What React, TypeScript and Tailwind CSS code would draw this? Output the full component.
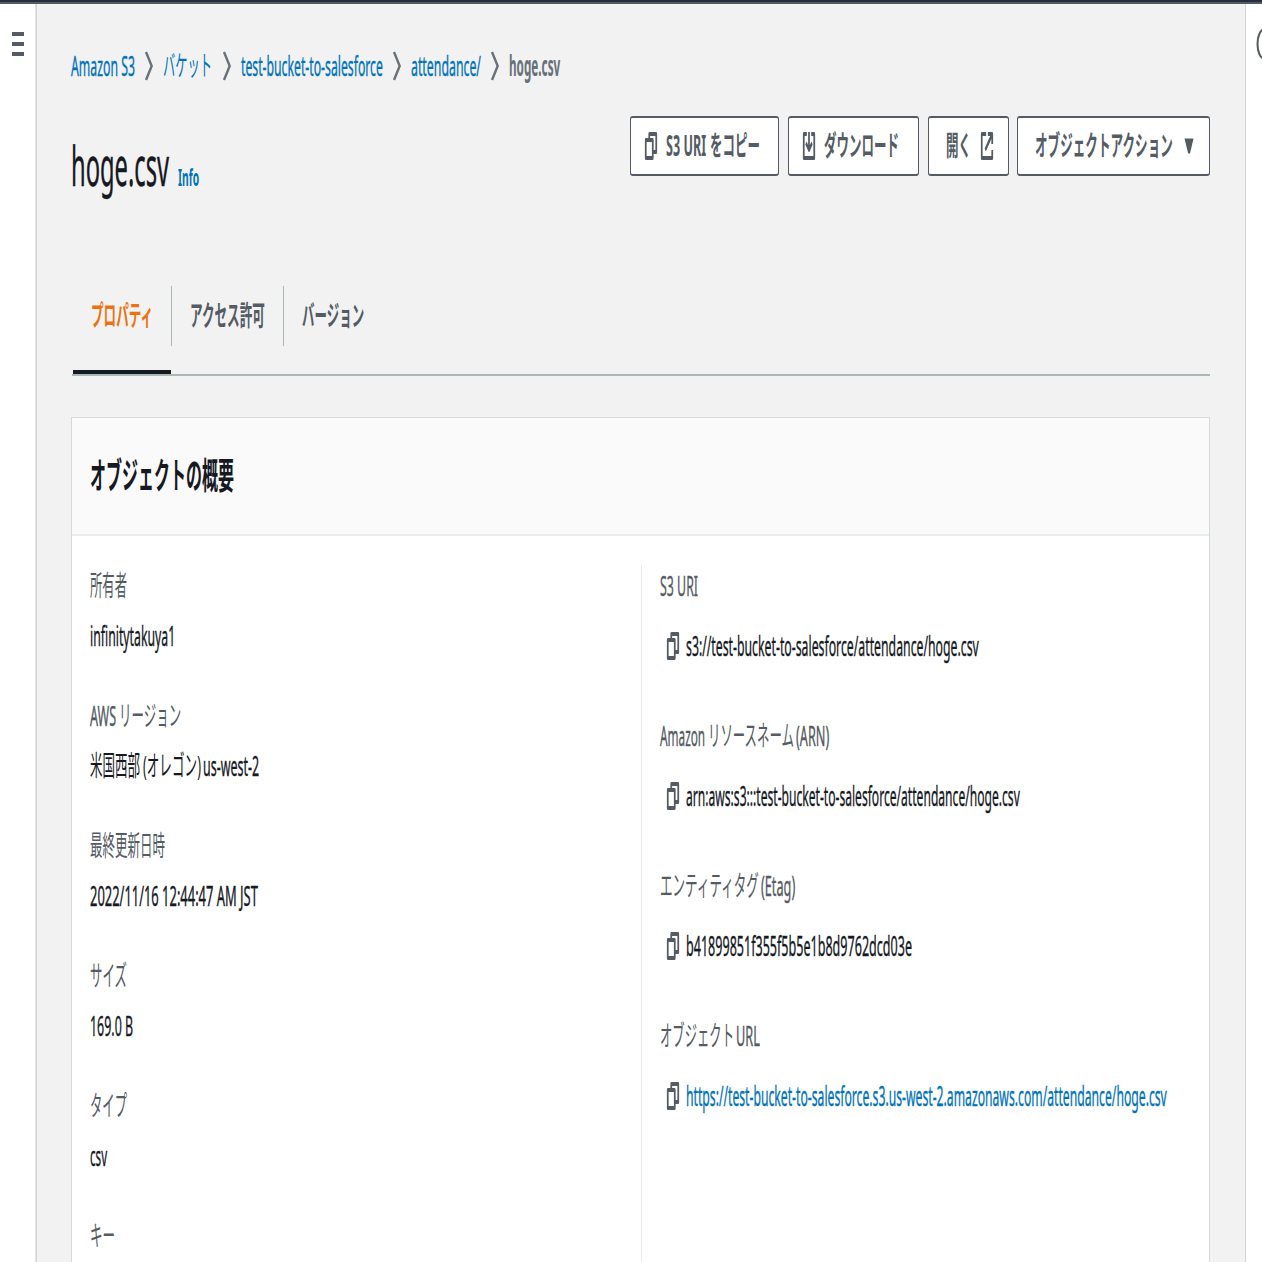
import React, { useLayoutEffect, useRef } from 'react';
import clsx from 'clsx';

interface FitProps {
  className?: string;
  children: React.ReactNode;
}

// Condenses its text horizontally so that it fills the width of the box
const Fit: React.FC<FitProps> = ({ className, children }) => {
  const box = useRef<HTMLSpanElement>(null);
  const text = useRef<HTMLSpanElement>(null);
  // regular latin text is a bit heavier than the kana next to it
  const latin = typeof children === 'string' && /^[\x20-\x7e]+$/.test(children);
  const heavy = latin && !className?.includes('font-bold');

  useLayoutEffect(() => {
    if (!box.current || !text.current) return;
    const ratio = box.current.clientWidth / text.current.offsetWidth;
    text.current.style.transform = `scaleX(${ratio})`;
  }, []);

  return (
    <span ref={box} className={clsx('block shrink-0', className)}>
      <span
        ref={text}
        className={clsx('inline-block whitespace-nowrap origin-left', heavy && '[-webkit-text-stroke:0.4px]')}
      >
        {children}
      </span>
    </span>
  );
};

const iconProps = {
  viewBox: '0 0 16 16',
  preserveAspectRatio: 'none',
  fill: 'none',
  stroke: 'currentColor',
  strokeWidth: 2,
  strokeLinejoin: 'round' as const,
};

const CopyIcon = () => (
  <svg {...iconProps} className="w-[14px] h-8 shrink-0 text-[#545b64]">
    <path d="M2 5h8v9H2z" />
    <path d="M6 5V2h8v9h-4" />
  </svg>
);

const DownloadIcon = () => (
  <svg {...iconProps} className="w-[14px] h-8 shrink-0">
    <path d="M5.500 2H2v12h12V2h-3.500" />
    <path d="M8 1v9M4.500 6.500L8 10l3.500-3.500" />
  </svg>
);

const ExternalIcon = () => (
  <svg {...iconProps} className="w-[14px] h-8 shrink-0">
    <path d="M7 2H2v12h12v-4" />
    <path d="M9 2h5v5M14 2l-8 8" />
  </svg>
);

const Chevron = ({ className }: { className: string }) => (
  <svg viewBox="0 0 8 30" fill="none" className={clsx('w-2 h-[30px] shrink-0', className)}>
    <path d="M1 1l5.700 14L1 29" stroke="#687078" strokeWidth="2.400" />
  </svg>
);

const Button = ({ className, children }: FitProps) => (
  <button
    className={clsx(
      'h-[60px] flex items-center bg-white border-x border-y-2 border-[#545b64] rounded-[3px] font-bold text-[#545b64]',
      className,
    )}
  >
    {children}
  </button>
);

const leftFields = [
  {
    label: <Fit className="w-[37px]">所有者</Fit>,
    value: <Fit className="w-[85px]">infinitytakuya1</Fit>,
  },
  {
    label: (
      <>
        <Fit className="w-[26px]">AWS</Fit>
        <Fit className="w-[62px] ml-[3px]">リージョン</Fit>
      </>
    ),
    value: (
      <>
        <Fit className="w-[50px]">米国西部</Fit>
        <Fit className="w-[58px] ml-[3px]">(オレゴン)</Fit>
        <Fit className="w-[56px] ml-[2px]">us-west-2</Fit>
      </>
    ),
  },
  {
    label: <Fit className="w-[75px]">最終更新日時</Fit>,
    value: <Fit className="w-[168px]">2022/11/16 12:44:47 AM JST</Fit>,
  },
  {
    label: <Fit className="w-[37px]">サイズ</Fit>,
    value: <Fit className="w-[43px]">169.0 B</Fit>,
  },
  {
    label: <Fit className="w-[37px]">タイプ</Fit>,
    value: <Fit className="w-[17px]">csv</Fit>,
  },
  {
    label: <Fit className="w-[25px]">キー</Fit>,
    value: null,
  },
];

const rightFields = [
  {
    label: <Fit className="w-[38px]">S3 URI</Fit>,
    value: <Fit className="w-[293px]">s3://test-bucket-to-salesforce/attendance/hoge.csv</Fit>,
  },
  {
    label: (
      <>
        <Fit className="w-[45px]">Amazon</Fit>
        <Fit className="w-[86px] ml-[3px]">リソースネーム</Fit>
        <Fit className="w-[33px] ml-[2px]">(ARN)</Fit>
      </>
    ),
    value: <Fit className="w-[334px]">arn:aws:s3:::test-bucket-to-salesforce/attendance/hoge.csv</Fit>,
  },
  {
    label: (
      <>
        <Fit className="w-[99px]">エンティティタグ</Fit>
        <Fit className="w-[34px] ml-[2px]">(Etag)</Fit>
      </>
    ),
    value: <Fit className="w-[226px]">b41899851f355f5b5e1b8d9762dcd03e</Fit>,
  },
  {
    label: (
      <>
        <Fit className="w-[74px]">オブジェクト</Fit>
        <Fit className="w-[24px] ml-[2px]">URL</Fit>
      </>
    ),
    value: (
      <Fit className="w-[481px] text-[#0073bb]">
        https://test-bucket-to-salesforce.s3.us-west-2.amazonaws.com/attendance/hoge.csv
      </Fit>
    ),
  },
];

const App: React.FC = () => {
  return (
    <div className="w-[1262px] h-[1262px] overflow-hidden flex flex-col bg-white font-['Noto_Sans','Noto_Sans_CJK_JP',sans-serif] text-[28px] leading-[40px] text-[#16191f]">
      <div className="h-1 shrink-0 bg-[#232f3e] border-b-2 border-[#545b64]" />

      <div className="flex flex-1 min-h-0">
        {/* Collapsed navigation */}
        <aside className="w-9 shrink-0 pt-7 pl-[11.5px] flex flex-col gap-1.5 border-r border-[#e3e3e3]">
          <span className="w-[12.5px] h-1 bg-[#545b64]" />
          <span className="w-[12.5px] h-1 bg-[#545b64]" />
          <span className="w-[12.5px] h-1 bg-[#545b64]" />
        </aside>

        <main className="w-[1210px] shrink-0 bg-[#f2f2f2] border-x border-[#cfd4d4] pl-[34px] pr-[35px] pt-[41px] flex flex-col">
          {/* Breadcrumbs */}
          <nav className="flex h-10 shrink-0 items-center text-[#0073bb]">
            <Fit className="w-[64px]">Amazon S3</Fit>
            <Chevron className="ml-[10px] mb-[-2px]" />
            <Fit className="w-[49px] ml-[10px]">バケット</Fit>
            <Chevron className="ml-[11px] mb-[-2px]" />
            <Fit className="w-[142px] ml-[10px]">test-bucket-to-salesforce</Fit>
            <Chevron className="ml-[10px] mb-[-2px]" />
            <Fit className="w-[70px] ml-[10px]">attendance/</Fit>
            <Chevron className="ml-[10px] mb-[-2px]" />
            <Fit className="w-[51px] ml-[10px] font-bold text-[#687078]">hoge.csv</Fit>
          </nav>

          {/* Title and actions */}
          <header className="mt-[31px] h-[170px] shrink-0 flex items-start justify-between">
            <h1 className="pt-3 flex items-baseline">
              <Fit className="w-[98px] text-[54px] leading-[74px]">hoge.csv</Fit>
              <Fit className="w-[21px] ml-[9px] text-[24px] font-bold text-[#0073bb]">Info</Fit>
            </h1>
            <div className="flex">
              <Button className="w-[149px] pl-[13px]">
                <CopyIcon />
                <Fit className="w-[40px] ml-[8px] mb-[2px] font-bold">S3 URI</Fit>
                <Fit className="w-[50px] ml-[4px] mb-[2px]">をコピー</Fit>
              </Button>
              <Button className="w-[131px] ml-[9px] pl-[13px]">
                <DownloadIcon />
                <Fit className="w-[75px] ml-[8px] mb-[2px]">ダウンロード</Fit>
              </Button>
              <Button className="w-[81px] ml-[9px] pl-[17px]">
                <Fit className="w-[25px] mb-[2px]">開く</Fit>
                <span className="ml-[9px]"><ExternalIcon /></span>
              </Button>
              <Button className="w-[193px] ml-[8px] pl-[17px]">
                <Fit className="w-[138px] mb-[2px]">オブジェクトアクション</Fit>
                <svg viewBox="0 0 10 16" className="w-[10px] h-4 ml-[11px]">
                  <path d="M0.500 0.500h9L6 15.500H4.200z" fill="currentColor" />
                </svg>
              </Button>
            </div>
          </header>

          {/* Tabs */}
          <div className="ml-px h-[90px] shrink-0 flex border-b-2 border-[#aab7b8] font-bold text-[#545b64] leading-[58px]">
            <div className="w-[98px] ml-px pl-[18px] border-b-4 border-[#16191f] text-[#ec7211]">
              <Fit className="w-[62px]">プロパティ</Fit>
            </div>
            <div className="w-[113px] h-[60px] pl-[18px] border-x border-[#aab7b8]">
              <Fit className="w-[75px]">アクセス許可</Fit>
            </div>
            <div className="h-[60px] pl-[18px]">
              <Fit className="w-[62px]">バージョン</Fit>
            </div>
          </div>

          {/* Object overview */}
          <section className="mt-[41px] flex-1 min-h-0 flex flex-col bg-white border border-b-0 border-[#d5dbdb]">
            <div className="h-[118px] shrink-0 pl-[18px] bg-[#fafafa] border-b-2 border-[#eaeded]">
              <h2 className="text-[36px] leading-[115px] font-bold">
                <Fit className="w-[144px]">オブジェクトの概要</Fit>
              </h2>
            </div>
            <div className="flex-1 min-h-0 flex pt-[29px]">
              <div className="w-[570px] shrink-0 pl-[18px] flex flex-col gap-10 border-r border-[#eaeded]">
                {leftFields.map((field, i) => (
                  <div key={i}>
                    <div className="flex text-[#545b64]">{field.label}</div>
                    <div className="flex mt-2.5">{field.value}</div>
                  </div>
                ))}
              </div>
              <div className="flex-1 pl-[18px] flex flex-col gap-[50px]">
                {rightFields.map((field, i) => (
                  <div key={i}>
                    <div className="flex text-[#545b64]">{field.label}</div>
                    <div className="flex items-center mt-5 pl-[6px]">
                      <span className="h-8 flex mt-0.5"><CopyIcon /></span>
                      <span className="ml-[6px]">{field.value}</span>
                    </div>
                  </div>
                ))}
              </div>
            </div>
          </section>
        </main>

        {/* Help panel edge */}
        <aside className="flex-1 min-w-0 overflow-hidden pt-6 pl-[10px]">
          <svg viewBox="0 0 15 32" className="w-[15px] h-8 max-w-none">
            <ellipse cx="8" cy="16" rx="6.500" ry="14.500" fill="none" stroke="#545b64" strokeWidth="2" />
          </svg>
        </aside>
      </div>
    </div>
  );
};

export default App;
